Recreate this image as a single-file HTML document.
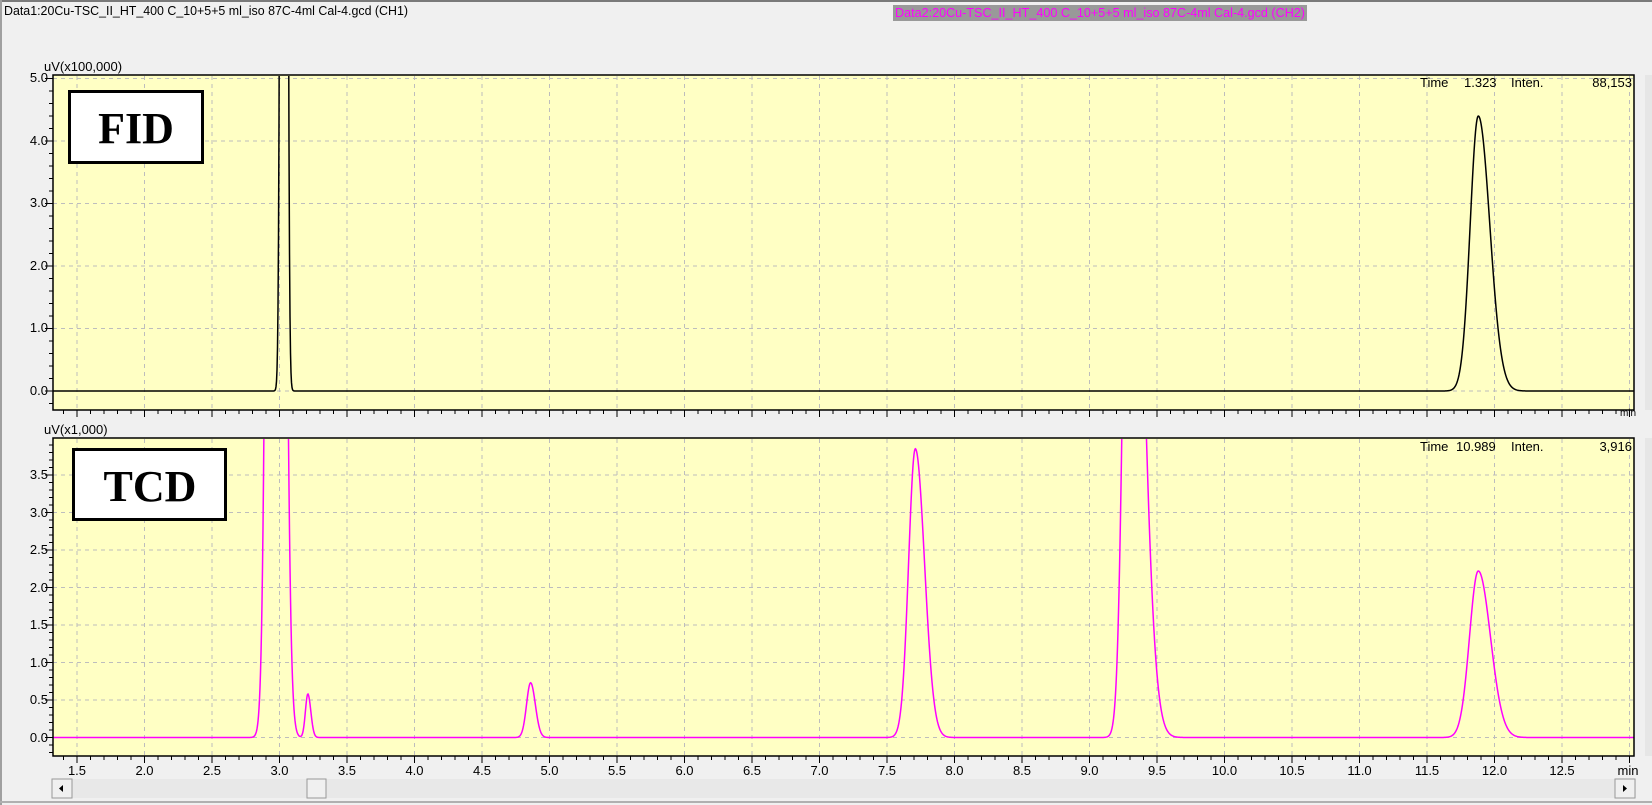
<!DOCTYPE html>
<html><head><meta charset="utf-8"><style>
html,body{margin:0;padding:0;background:#f0f0f0;}
svg{display:block;font-family:"Liberation Sans",Arial,sans-serif;}
</style></head><body>
<svg id="s" width="1652" height="805" xmlns="http://www.w3.org/2000/svg">
<rect x="0" y="0" width="1652" height="805" fill="#f0f0f0"/>
<rect x="0" y="0" width="1652" height="2" fill="#7a7a7a"/>
<rect x="0" y="0" width="2" height="805" fill="#a0a0a0"/>
<rect x="0" y="801" width="1652" height="2" fill="#b0b0b0"/>
<text x="4" y="15" font-size="13" fill="#000" textLength="404" lengthAdjust="spacingAndGlyphs">Data1:20Cu-TSC_II_HT_400 C_10+5+5 ml_iso 87C-4ml Cal-4.gcd (CH1)</text>
<rect x="893" y="5" width="414" height="16" fill="#999"/>
<text x="895" y="17" font-size="13" fill="#ff00ff" textLength="410" lengthAdjust="spacingAndGlyphs">Data2:20Cu-TSC_II_HT_400 C_10+5+5 ml_iso 87C-4ml Cal-4.gcd (CH2)</text>
<defs>
<clipPath id="c1"><rect x="53" y="76" width="1581" height="334"/></clipPath>
<clipPath id="c2"><rect x="53" y="439" width="1581" height="317"/></clipPath>
</defs>
<rect x="53" y="75" width="1581" height="335" fill="#ffffc4"/>
<rect x="53" y="438" width="1581" height="318" fill="#ffffc4"/>
<g id="grid"></g>
<g id="curves"></g>
<rect x="53" y="75" width="1581" height="335" fill="none" stroke="#000" stroke-width="1.5"/>
<rect x="53" y="438" width="1581" height="318" fill="none" stroke="#000" stroke-width="1.5"/>
<g id="ticks" stroke="#000" stroke-width="1"></g>
<g font-size="13" fill="#000">
<text x="44" y="71">uV(x100,000)</text>
<text x="44" y="434">uV(x1,000)</text>
</g>
<g font-size="13" fill="#000" text-anchor="end">
<text x="48" y="82">5.0</text><text x="48" y="145">4.0</text><text x="48" y="207">3.0</text>
<text x="48" y="270">2.0</text><text x="48" y="332">1.0</text><text x="48" y="395">0.0</text>
<text x="48" y="479">3.5</text><text x="48" y="517">3.0</text><text x="48" y="554">2.5</text>
<text x="48" y="592">2.0</text><text x="48" y="629">1.5</text><text x="48" y="667">1.0</text>
<text x="48" y="704">0.5</text><text x="48" y="742">0.0</text>
</g>
<g font-size="13" fill="#000" text-anchor="middle">
<text x="77" y="775">1.5</text><text x="144.5" y="775">2.0</text><text x="212" y="775">2.5</text>
<text x="279.5" y="775">3.0</text><text x="347" y="775">3.5</text><text x="414.5" y="775">4.0</text>
<text x="482" y="775">4.5</text><text x="549.5" y="775">5.0</text><text x="617" y="775">5.5</text>
<text x="684.5" y="775">6.0</text><text x="752" y="775">6.5</text><text x="819.5" y="775">7.0</text>
<text x="887" y="775">7.5</text><text x="954.5" y="775">8.0</text><text x="1022" y="775">8.5</text>
<text x="1089.5" y="775">9.0</text><text x="1157" y="775">9.5</text><text x="1224.5" y="775">10.0</text>
<text x="1292" y="775">10.5</text><text x="1359.5" y="775">11.0</text><text x="1427" y="775">11.5</text>
<text x="1494.5" y="775">12.0</text><text x="1562" y="775">12.5</text><text x="1628" y="775">min</text>
<text x="1628" y="416" font-size="10">min</text>
</g>
<g font-size="13" fill="#000">
<text x="1420" y="87">Time</text><text x="1464" y="87">1.323</text><text x="1511" y="87">Inten.</text><text x="1632" y="87" text-anchor="end">88,153</text>
<text x="1420" y="451">Time</text><text x="1456" y="451">10.989</text><text x="1511" y="451">Inten.</text><text x="1632" y="451" text-anchor="end">3,916</text>
</g>
<rect x="69.5" y="91.5" width="133" height="71" fill="#fff" stroke="#000" stroke-width="3"/>
<text x="136" y="143" font-family="'Liberation Serif',serif" font-weight="bold" font-size="44" text-anchor="middle">FID</text>
<rect x="73.5" y="449.5" width="152" height="70" fill="#fff" stroke="#000" stroke-width="3"/>
<text x="150" y="501" font-family="'Liberation Serif',serif" font-weight="bold" font-size="44" text-anchor="middle">TCD</text>
<rect x="52" y="779" width="1584" height="19" fill="#e8e8e8"/>
<rect x="52" y="779" width="20" height="19" fill="#f0f0f0" stroke="#999" stroke-width="1"/>
<path d="M59 788.5 L63 785 L63 792 Z" fill="#000"/>
<rect x="307" y="779" width="19" height="19" fill="#f0f0f0" stroke="#999" stroke-width="1"/>
<rect x="1615" y="779" width="20" height="19" fill="#f0f0f0" stroke="#999" stroke-width="1"/>
<path d="M1627 788.5 L1623 785 L1623 792 Z" fill="#000"/>
<rect x="1645" y="75" width="7" height="335" fill="#e6e6e6"/>
<rect x="1645" y="438" width="7" height="318" fill="#e6e6e6"/>
</svg>
<script>
var NS="http://www.w3.org/2000/svg";
function X(t){return 77+(t-1.5)*135;}
function el(p,n,a){var e=document.createElementNS(NS,n);for(var k in a)e.setAttribute(k,a[k]);document.getElementById(p).appendChild(e);return e;}
var t;
for(t=1.5;t<=13.01;t+=0.5){var x=X(t);
 el("grid","line",{x1:x,y1:76,x2:x,y2:410,stroke:"#bdbdbd","stroke-dasharray":"4,4"});
 el("grid","line",{x1:x,y1:439,x2:x,y2:756,stroke:"#bdbdbd","stroke-dasharray":"4,4"});}
for(var v=0;v<=5;v++){var y=391-v*62.5;el("grid","line",{x1:53,y1:y,x2:1634,y2:y,stroke:"#bdbdbd","stroke-dasharray":"4,4"});}
for(v=0;v<=3.5;v+=0.5){var y=737.5-v*75;el("grid","line",{x1:53,y1:y,x2:1634,y2:y,stroke:"#bdbdbd","stroke-dasharray":"4,4"});}
for(var i=0;i<=117;i++){t=1.4+i*0.1;var x=X(t);if(x<53||x>1634)continue;var maj=Math.abs((t*2)-Math.round(t*2))<1e-6;
 var L=maj?7:4;
 el("ticks","line",{x1:x,y1:410,x2:x,y2:410+L});el("ticks","line",{x1:x,y1:756,x2:x,y2:756+L});}
for(v=-0.6;v<=5.3;v+=0.2){var y=391-v*62.5;if(y<75||y>410)continue;var maj=Math.abs(v-Math.round(v))<1e-6;el("ticks","line",{x1:maj?45:49,y1:y,x2:53,y2:y});}
for(v=-0.3;v<=4;v+=0.1){var y=737.5-v*75;if(y<438||y>756)continue;var maj=Math.abs(v*2-Math.round(v*2))<1e-6;el("ticks","line",{x1:maj?45:49,y1:y,x2:53,y2:y});}
function f(t,P){var s=0;for(var k=0;k<P.length;k++){var p=P[k],d=t-p[0],sg=d<0?p[2]:p[3];s+=p[1]*Math.exp(-d*d/(2*sg*sg));}return s;}
function path(P,y0,sc,clip,col){var d="";for(var x=53;x<=1634;x+=0.5){var tt=(x-77)/135+1.5;var y=y0-f(tt,P)*sc;if(y<-500)y=-500;d+=(d?"L":"M")+x.toFixed(1)+" "+y.toFixed(2);}
 el("curves","path",{d:d,fill:"none",stroke:col,"stroke-width":1.5,"clip-path":"url(#"+clip+")"});}
path([[3.033,60,0.016,0.016],[11.88,4.4,0.06,0.085]],391,62.5,"c1","#000");
path([[2.97,40,0.04,0.045],[3.21,0.58,0.018,0.022],[4.86,0.73,0.03,0.035],[7.71,3.85,0.05,0.068],[9.30,10,0.045,0.09],[11.88,2.22,0.065,0.09]],737.5,75,"c2","#ff00ff");
</script>
</body></html>
